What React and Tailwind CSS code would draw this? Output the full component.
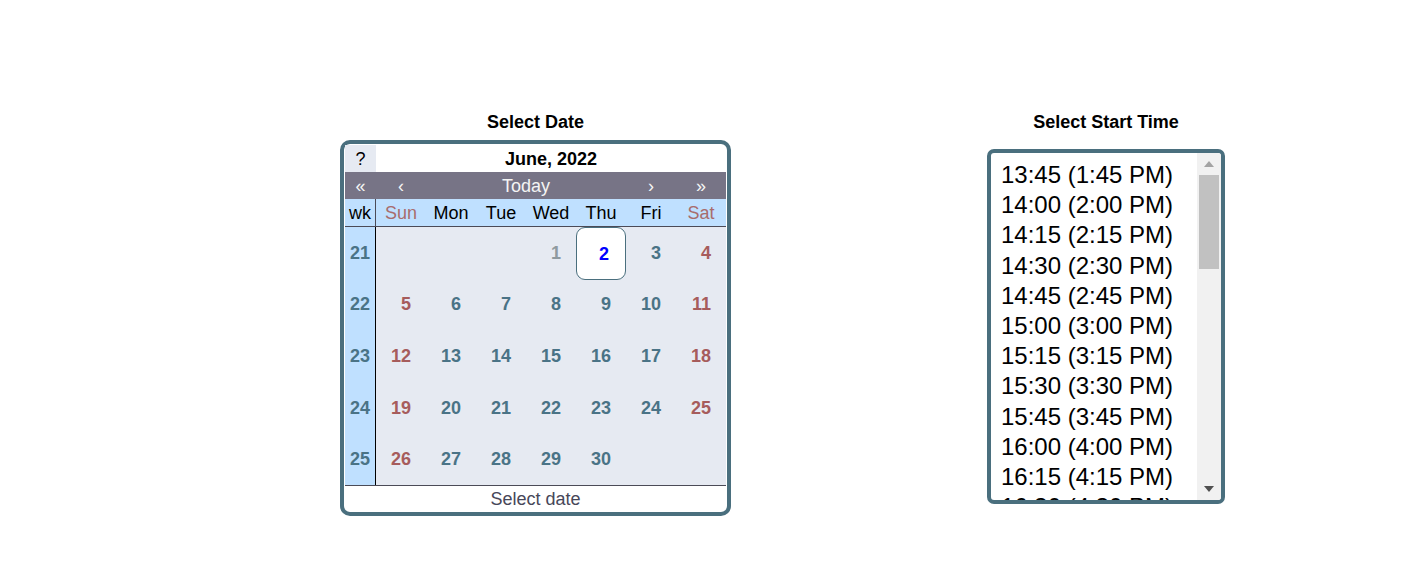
const weeks = [
    { wk: 21, days: [null, null, null, 1, 2, 3, 4] },
    { wk: 22, days: [5, 6, 7, 8, 9, 10, 11] },
    { wk: 23, days: [12, 13, 14, 15, 16, 17, 18] },
    { wk: 24, days: [19, 20, 21, 22, 23, 24, 25] },
    { wk: 25, days: [26, 27, 28, 29, 30, null, null] },
]

const dayNames = ['Sun', 'Mon', 'Tue', 'Wed', 'Thu', 'Fri', 'Sat']

const times = [
    '13:45 (1:45 PM)',
    '14:00 (2:00 PM)',
    '14:15 (2:15 PM)',
    '14:30 (2:30 PM)',
    '14:45 (2:45 PM)',
    '15:00 (3:00 PM)',
    '15:15 (3:15 PM)',
    '15:30 (3:30 PM)',
    '15:45 (3:45 PM)',
    '16:00 (4:00 PM)',
    '16:15 (4:15 PM)',
    '16:30 (4:30 PM)',
]

function DayCell({ day, col }) {
    if (day === null) return <div className="w-[50px]" />
    if (day === 2) {
        return (
            <div className="w-[50px] h-[53px] self-start bg-white border border-[#4a6f7e] rounded-[9px] flex items-center justify-end pr-[16px] text-[#0000ff]">
                {day}
            </div>
        )
    }
    let color = 'text-[#4a7386]'
    if (col === 0 || col === 6) color = 'text-[#a65c5c]'
    if (day === 1) color = 'text-[#8f9aa0]'
    return <div className={'w-[50px] flex items-center justify-end pr-[15px] ' + color}>{day}</div>
}

function Calendar() {
    return (
        <div className="w-[391px] border-4 border-[#4a6f7e] rounded-[10px] bg-white p-px text-[18px] leading-none">
            <div className="flex h-[27px]">
                <div className="w-[31px] bg-[#e6eaf2] flex items-center justify-center">?</div>
                <div className="flex-1 flex items-center justify-center font-bold">June, 2022</div>
            </div>
            <div className="flex h-[27px] bg-[#777486] text-[#f4f4f4]">
                <div className="w-[31px] flex items-center justify-center">«</div>
                <div className="w-[50px] flex items-center justify-center">‹</div>
                <div className="w-[200px] flex items-center justify-center">Today</div>
                <div className="w-[50px] flex items-center justify-center">›</div>
                <div className="w-[50px] flex items-center justify-center">»</div>
            </div>
            <div className="flex h-[28px] bg-[#bfe0ff] border-b border-[#4b4b57]">
                <div className="w-[31px] flex items-center justify-center border-r border-[#4b4b57]">wk</div>
                {dayNames.map((d, i) => (
                    <div
                        key={d}
                        className={'w-[50px] flex items-center justify-center ' + (i === 0 || i === 6 ? 'text-[#a86c6c]' : 'text-black')}
                    >
                        {d}
                    </div>
                ))}
            </div>
            <div className="flex flex-col h-[259px] bg-[#e6eaf2] font-bold border-b border-[#4b4b57]">
                {weeks.map((w) => (
                    <div key={w.wk} className="flex h-[51.6px] flex-none">
                        <div className="w-[31px] bg-[#bfe0ff] border-r border-black flex items-center justify-center text-[#4a7386]">
                            {w.wk}
                        </div>
                        {w.days.map((d, i) => (
                            <DayCell key={i} day={d} col={i} />
                        ))}
                    </div>
                ))}
            </div>
            <div className="h-[25px] flex items-center justify-center text-[#474759]">Select date</div>
        </div>
    )
}

function TimeList() {
    return (
        <div className="w-[238px] h-[355px] border-4 border-[#4a6f7e] rounded-[7px] bg-white flex overflow-hidden">
            <div className="flex-1 overflow-hidden pl-[10px] pt-[7px] text-[24px] leading-[30.2px] text-black">
                {times.map((t) => (
                    <div key={t} className="whitespace-nowrap">{t}</div>
                ))}
            </div>
            <div className="w-[24px] bg-[#f1f1f1] flex flex-col items-center">
                <div className="h-[22px] flex items-center justify-center">
                    <svg width="10" height="6" viewBox="0 0 10 6"><path d="M0 6 L5 0 L10 6 Z" fill="#a3a3a3" /></svg>
                </div>
                <div className="w-[20px] h-[94px] bg-[#c1c1c1]" />
                <div className="flex-1" />
                <div className="h-[22px] flex items-center justify-center">
                    <svg width="10" height="6" viewBox="0 0 10 6"><path d="M0 0 L10 0 L5 6 Z" fill="#505050" /></svg>
                </div>
            </div>
        </div>
    )
}

export default function App() {
    return (
        <div className="w-[1413px] h-[576px] bg-white font-['Liberation_Sans',Arial,sans-serif] flex items-start pl-[340px] pt-[112px] gap-[256px]">
            <div className="flex flex-col items-center">
                <div className="text-[18px] font-bold leading-[20px] h-[28px]">Select Date</div>
                <Calendar />
            </div>
            <div className="flex flex-col items-center">
                <div className="text-[18px] font-bold leading-[20px] h-[37px]">Select Start Time</div>
                <TimeList />
            </div>
        </div>
    )
}
